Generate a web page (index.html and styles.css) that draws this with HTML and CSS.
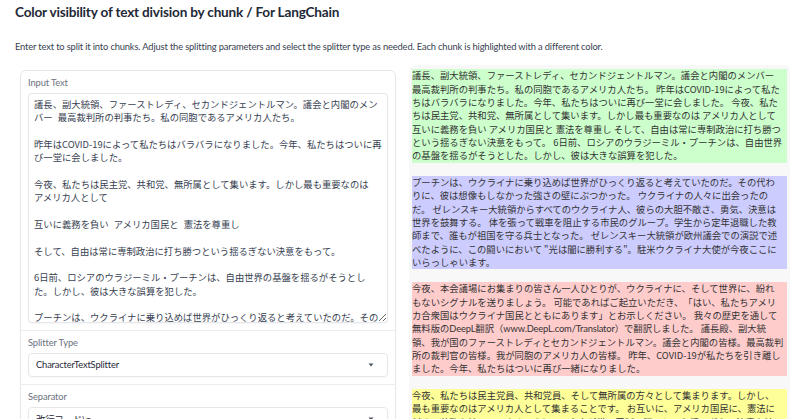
FILE: index.html
```html
<!DOCTYPE html>
<html lang="ja">
<head>
    <meta charset="UTF-8">
    <title>Color visibility of text division by chunk</title>
    <link rel="stylesheet" href="styles.css">
</head>
<body>
<div class="header">
    <h1 class="title">Color visibility of text division by chunk / For LangChain</h1>
    <p class="intro">Enter text to split it into chunks. Adjust the splitting parameters and select the splitter type as needed. Each chunk is highlighted with a different color.</p>
</div>

<div class="columns">
    <div class="form">
        <div class="block">
            <label class="label" for="input-text">Input Text</label>
            <textarea id="input-text" class="textarea">議長、副大統領、ファーストレディ、セカンドジェントルマン。議会と内閣のメンバー 最高裁判所の判事たち。私の同胞であるアメリカ人たち。

昨年はCOVID-19によって私たちはバラバラになりました。今年、私たちはついに再び一堂に会しました。

今夜、私たちは民主党、共和党、無所属として集います。しかし最も重要なのは アメリカ人として

互いに義務を負い アメリカ国民と 憲法を尊重し

そして、自由は常に専制政治に打ち勝つという揺るぎない決意をもって。

6日前、ロシアのウラジーミル・プーチンは、自由世界の基盤を揺るがそうとした。しかし、彼は大きな誤算を犯した。

プーチンは、ウクライナに乗り込めば世界がひっくり返ると考えていたのだ。その代わりに、彼は想像もしなかった強さの壁にぶつかった。

ウクライナの人々に出会ったのだ。</textarea>
        </div>
        <div class="block">
            <div class="label">Splitter Type</div>
            <div class="dropdown">
                <span>CharacterTextSplitter</span>
                <svg class="arrow" width="6" height="4" viewBox="0 0 6 4"><path d="M0.5 0.5 L5.5 0.5 L3 3.5 Z" fill="#4b5563"/></svg>
            </div>
        </div>
        <div class="block">
            <div class="label">Separator</div>
            <div class="dropdown">
                <span>改行コード\n</span>
                <svg class="arrow" width="6" height="4" viewBox="0 0 6 4"><path d="M0.5 0.5 L5.5 0.5 L3 3.5 Z" fill="#4b5563"/></svg>
            </div>
        </div>
    </div>

    <div class="output">
        <div class="chunk green">議長、副大統領、ファーストレディ、セカンドジェントルマン。議会と内閣のメンバー 最高裁判所の判事たち。私の同胞であるアメリカ人たち。 昨年はCOVID-19によって私たちはバラバラになりました。今年、私たちはついに再び一堂に会しました。 今夜、私たちは民主党、共和党、無所属として集います。しかし最も重要なのは アメリカ人として 互いに義務を負い アメリカ国民と 憲法を尊重し そして、自由は常に専制政治に打ち勝つという揺るぎない決意をもって。 6日前、ロシアのウラジーミル・プーチンは、自由世界の基盤を揺るがそうとした。しかし、彼は大きな誤算を犯した。</div>
        <div class="chunk purple">プーチンは、ウクライナに乗り込めば世界がひっくり返ると考えていたのだ。その代わりに、彼は想像もしなかった強さの壁にぶつかった。 ウクライナの人々に出会ったのだ。 ゼレンスキー大統領からすべてのウクライナ人、彼らの大胆不敵さ、勇気、決意は世界を鼓舞する。 体を張って戦車を阻止する市民のグループ。学生から定年退職した教師まで、誰もが祖国を守る兵士となった。 ゼレンスキー大統領が欧州議会での演説で述べたように、この闘いにおいて "光は闇に勝利する"。駐米ウクライナ大使が今夜ここにいらっしゃいます。</div>
        <div class="chunk pink">今夜、本会議場にお集まりの皆さん一人ひとりが、ウクライナに、そして世界に、紛れもないシグナルを送りましょう。 可能であればご起立いただき、「はい、私たちアメリカ合衆国はウクライナ国民とともにあります」とお示しください。 我々の歴史を通して無料版の<span class="latin">DeepL</span>翻訳（<span class="latin">www.DeepL.com/Translator</span>）で翻訳しました。 議長殿、副大統領、我が国のファーストレディとセカンドジェントルマン。議会と内閣の皆様。最高裁判所の裁判官の皆様。我が同胞のアメリカ人の皆様。 昨年、COVID-19が私たちを引き離しました。今年、私たちはついに再び一緒になりました。</div>
        <div class="chunk yellow">今夜、私たちは民主党員、共和党員、そして無所属の方々として集まります。しかし、最も重要なのはアメリカ人として集まることです。 お互いに、アメリカ国民に、憲法に対する義務を持っています。そして、自由が常に圧制に勝つという揺るぎない決意を持って。</div>
    </div>
</div>
</body>
</html>
```

FILE: styles.css
```css
body {
    margin: 0;

    font-family: "Noto Sans CJK JP", Lato, sans-serif;
    color: #374151;
    background-color: #fff;
    text-spacing-trim: space-all;
}

.header {
    padding: 0 15px;
}

.title {
    font-family: Lato, "Noto Sans CJK JP", sans-serif;
    font-size: 13.6px;
    font-weight: 700;
    line-height: 19px;

    margin: 3px 0 0;

    letter-spacing: -0.2px;
    color: #1f2937;
}

.intro {
    font-family: Lato, "Noto Sans CJK JP", sans-serif;
    font-size: 9.33px;
    line-height: 13.3px;

    margin: 18px 0 0;

    letter-spacing: -0.15px;
}

.columns {
    display: flex;
    align-items: flex-start;
    gap: 13px;

    margin-top: 12px;
    padding: 0 10px 0 20px;
}

.form {
    display: flex;
    flex-direction: column;
    gap: 1px;

    width: 375px;
    margin-top: 5px;

    overflow: hidden;

    border: 1px solid #e5e7eb;
    border-radius: 6px;
    background-color: #ececec;
}

.block {
    display: flex;
    flex-direction: column;

    padding: 5px 7px 7px;

    background-color: #fff;
}

.label {
    font-family: Lato, "Noto Sans CJK JP", sans-serif;
    font-size: 9.33px;
    line-height: 13.3px;

    margin-bottom: 3.5px;

    letter-spacing: -0.1px;
    color: #6b7280;
}

.textarea {
    font-family: "Noto Sans CJK JP", Lato, sans-serif;
    font-size: 9.33px;
    line-height: 13.33px;

    box-sizing: border-box;
    width: 100%;
    height: 230px;
    margin: 0;
    padding: 4px 4.25px 4px 5px;

    overflow: hidden;

    color: #374151;
    border: 1px solid #e5e7eb;
    border-radius: 4px;
    outline: none;
    box-shadow: 0 1px 2px rgba(0, 0, 0, .04);
    word-spacing: 3px;
    text-spacing-trim: space-all;
}

.dropdown {
    font-family: Lato, "Noto Sans CJK JP", sans-serif;
    font-size: 9.33px;

    display: flex;
    align-items: center;
    justify-content: space-between;

    box-sizing: border-box;
    height: 24px;
    padding: 0 13px 0 7px;

    letter-spacing: -0.15px;
    color: #1f2937;
    border: 1px solid #e5e7eb;
    border-radius: 4px;
    box-shadow: 0 1px 2px rgba(0, 0, 0, .04);
}

.output {
    width: 382px;
    padding: 4px 3px;

    box-sizing: border-box;

    border-radius: 6px;
    background-color: #f8f8f9;
}

.chunk {
    font-size: 9.33px;
    line-height: 13.33px;

    margin-bottom: 13.3px;
    padding-right: 3.5px;

    color: #333;
}

.latin {
    font-family: Lato, sans-serif;
    letter-spacing: -0.15px;
}

.green {
    background-color: #ccffcc;
}

.purple {
    background-color: #ccccff;
}

.pink {
    background-color: #ffcccc;
}

.yellow {
    background-color: #ffff99;
}
```
